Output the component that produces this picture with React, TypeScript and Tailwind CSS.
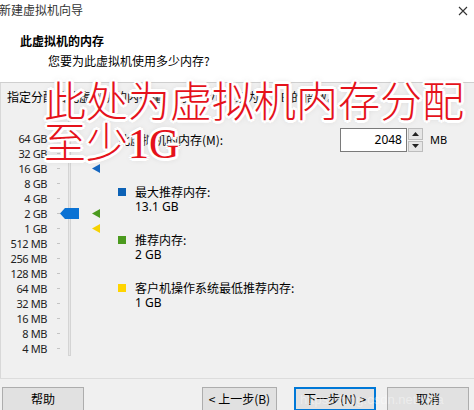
import React from 'react';

const sizes = ['64 GB', '32 GB', '16 GB', '8 GB', '4 GB', '2 GB', '1 GB', '512 MB', '256 MB', '128 MB', '64 MB', '32 MB', '16 MB', '8 MB', '4 MB'];

function Marker({ color }: { color: string }) {
  return (
    <svg width="8" height="9" viewBox="0 0 8 9">
      <polygon points="0,4.5 8,0 8,9" fill={color} />
    </svg>
  );
}

export default function App() {
  const markers: Record<number, string> = { 2: '#1366c0', 5: '#4b9a1e', 6: '#f6d200' };

  return (
    <div className="w-[474px] h-[410px] overflow-hidden relative bg-[#f0f0f0] text-[12px] text-black font-['Noto_Sans_CJK_SC',sans-serif]">
      {/* Header */}
      <div className="h-[83px] bg-white border-b border-[#cfcfcf]">
        <div className="flex justify-between items-center h-[20px]">
          <span className="-ml-[1px] text-[#333]">新建虚拟机向导</span>
          <svg width="10" height="10" viewBox="0 0 10 10" className="mr-[6px] mt-[2px]">
            <path d="M1 1 L9 9 M9 1 L1 9" stroke="#333" strokeWidth="1.1" />
          </svg>
        </div>
        <div className="pl-[20px] mt-[13px] leading-[16px] font-bold">此虚拟机的内存</div>
        <div className="pl-[48px] mt-[4px] leading-[16px]">您要为此虚拟机使用多少内存?</div>
      </div>

      {/* Body */}
      <div className="h-[295px] border-l border-[#d8d8d8]">
        <div className="pt-[6px] pl-[6px] leading-[16px]">指定分配给此虚拟机的内存量。内存大小必须为 4 MB 的倍数。</div>
        <div className="flex mt-[15px]">
          <div className="relative flex h-[236px] w-[117px]">
            <div className="w-[46px] pt-[11px] text-right text-[11px] tracking-[-0.4px] font-['Noto_Sans',sans-serif] text-[#222]">
              {sizes.map((s) => (
                <div key={s} className="h-[15px] leading-[15px]">{s}</div>
              ))}
            </div>
            <div className="w-[21px] pt-[11px] pl-[10px]">
              {sizes.map((s) => (
                <div key={s} className="h-[15px] flex items-center">
                  <div className="w-[3px] h-[1px] bg-[#c4c4c4]" />
                </div>
              ))}
            </div>
            <div className="w-[3px] h-full bg-[#e7e7e7] border border-[#d4d4d4]" />
            <div className="w-[47px] pt-[11px] pl-[21px]">
              {sizes.map((s, i) => (
                <div key={s} className="h-[15px] flex items-center">
                  {markers[i] && <Marker color={markers[i]} />}
                </div>
              ))}
            </div>
            <svg width="19" height="11" viewBox="0 0 19 11" className="absolute left-[59px] top-[88px]">
              <polygon points="0,5.5 5,0 19,0 19,11 5,11" fill="#0a72d4" />
            </svg>
          </div>

          <div className="flex-1 pt-[8px]">
            <div className="flex items-center h-[24px]">
              <div className="w-[222px]">此虚拟机的内存(M):</div>
              <div className="w-[67px] h-[24px] bg-white border border-[#7a7a7a] flex items-center justify-end pr-[4px] font-['Noto_Sans',sans-serif]">2048</div>
              <div className="w-[16px] h-[24px] flex flex-col gap-[1px] pl-[1px]">
                <div className="flex-1 bg-[#e6e6e6] border border-[#bdbdbd] flex items-center justify-center">
                  <svg width="7" height="4" viewBox="0 0 7 4"><polygon points="3.5,0 7,4 0,4" fill="#222" /></svg>
                </div>
                <div className="flex-1 bg-[#e6e6e6] border border-[#bdbdbd] flex items-center justify-center">
                  <svg width="7" height="4" viewBox="0 0 7 4"><polygon points="0,0 7,0 3.5,4" fill="#222" /></svg>
                </div>
              </div>
              <span className="ml-[7px] text-[11px] font-['Noto_Sans',sans-serif]">MB</span>
            </div>

            <div className="mt-[32px] flex flex-col gap-[18px]">
              {[
                ['#0c62b6', '最大推荐内存:', '13.1 GB'],
                ['#4b9a1e', '推荐内存:', '2 GB'],
                ['#ffd400', '客户机操作系统最低推荐内存:', '1 GB'],
              ].map(([c, label, value]) => (
                <div key={label} className="flex">
                  <div className="w-[8px] h-[8px] mt-[4px]" style={{ backgroundColor: c }} />
                  <div className="ml-[9px] leading-[15px]">
                    <div>{label}</div>
                    <div className="font-['Noto_Sans',sans-serif]">{value}</div>
                  </div>
                </div>
              ))}
            </div>
          </div>
        </div>
      </div>

      {/* Footer */}
      <div className="h-[32px] border-t border-[#dcdcdc] pt-[8px] flex">
        <button className="ml-[2px] w-[82px] h-[24px] bg-[#e1e1e1] border border-[#adadad]">帮助</button>
        <button className="ml-[118px] w-[75px] h-[24px] bg-[#e1e1e1] border border-[#adadad]">&lt; 上一步(B)</button>
        <button className="ml-[17px] w-[82px] h-[24px] bg-[#e1e1e1] border-2 border-[#0078d7]">下一步(N) &gt;</button>
        <button className="ml-[11px] w-[82px] h-[24px] bg-[#e1e1e1] border border-[#adadad]">取消</button>
      </div>

      {/* Overlay annotation */}
      <div className="absolute left-[44px] top-[78px] text-[42px] leading-[41px] font-light text-[#e5121b] font-['Noto_Sans_CJK_SC',serif] [text-shadow:3px_0_0_#fff,-3px_0_0_#fff,0_3px_0_#fff,0_-3px_0_#fff,2px_2px_0_#fff,-2px_-2px_0_#fff,2px_-2px_0_#fff,-2px_2px_0_#fff,0_0_6px_#aaa]">
        <div>此处为虚拟机内存分配</div>
        <div>至少<span className="font-['Liberation_Serif',serif] font-normal">1G</span></div>
      </div>

      {/* Watermark */}
      <div className="absolute left-[300px] top-[390px] text-[13px] text-white/40 font-['Liberation_Sans',sans-serif]">https://blog.csdn.net/wda</div>
    </div>
  );
}
